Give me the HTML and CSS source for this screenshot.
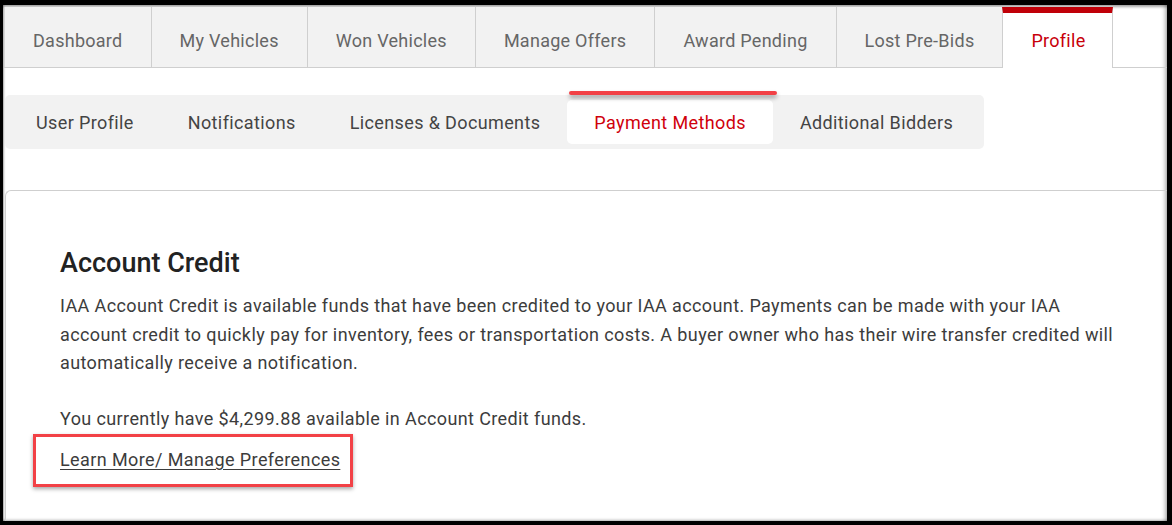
FILE: index.html
```html
<!DOCTYPE html>
<html>
<head>
<meta charset="utf-8">
<link rel="stylesheet" href="styles.css">
</head>
<body>
<div class="frame">
  <nav class="tabs">
    <a class="tab">Dashboard</a>
    <a class="tab">My Vehicles</a>
    <a class="tab">Won Vehicles</a>
    <a class="tab">Manage Offers</a>
    <a class="tab">Award Pending</a>
    <a class="tab">Lost Pre-Bids</a>
    <a class="tab tab-active">Profile</a>
  </nav>
  <div class="subnav-wrap">
    <nav class="subnav">
      <a class="sub">User Profile</a>
      <a class="sub">Notifications</a>
      <a class="sub">Licenses &amp; Documents</a>
      <a class="sub sub-active">Payment Methods<span class="mark-line"></span></a>
      <a class="sub">Additional Bidders</a>
    </nav>
  </div>
  <section class="card">
    <h2 class="title">Account Credit</h2>
    <p class="text">IAA Account Credit is available funds that have been credited to your IAA account. Payments can be made with your IAA account credit to quickly pay for inventory, fees or transportation costs. A buyer owner who has their wire transfer credited will automatically receive a notification.</p>
    <p class="text funds">You currently have $4,299.88 available in Account Credit funds.</p>
    <div class="link-row">
      <a class="link">Learn More/ Manage Preferences</a>
      <span class="mark-box"></span>
    </div>
  </section>
</div>
</body>
</html>
```

FILE: styles.css
```css
html, body {
  margin: 0;
  padding: 0;
  background: #000;
}
body {
  padding: 5px 5px 4px 3px;
  font-family: Roboto, "Liberation Sans", sans-serif;
}
.frame {
  position: relative;
  height: 516px;
  background: #fff;
  overflow: hidden;
  padding: 2px 0 0 1px;
  box-sizing: border-box;
  box-shadow: inset 0 3px 3px -1px rgba(0,0,0,0.35), inset 2px 0 2px -1px rgba(0,0,0,0.3), inset -4px 0 4px -2px rgba(0,0,0,0.3), inset 0 -3px 3px -2px rgba(0,0,0,0.25);
}
.tabs {
  display: flex;
  border-bottom: 1px solid #cfcfcf;
  height: 61px;
  box-sizing: border-box;
}
.tab {
  display: flex;
  align-items: center;
  justify-content: center;
  padding: 6px 28px 0;
  background: #f2f2f2;
  border-right: 1px solid #cfcfcf;
  color: #666;
  font-size: 18px;
  letter-spacing: 0.27px;
  height: 60px;
  box-sizing: border-box;
}
.tab:first-child {
  border-left: 1px solid #d6d6d6;
}
.tab-active {
  background: #fff;
  color: #c8000a;
  border-top: 6px solid #c00008;
  border-left: 1px solid #cfcfcf;
  margin-left: -1px;
  height: 61px;
  padding: 0 28px 0 29px;
  width: 111px;
}
.subnav-wrap {
  padding: 27px 0 0 1px;
}
.subnav {
  display: inline-flex;
  align-items: center;
  height: 54px;
  padding: 0 4px;
  background: #f2f2f2;
  border-radius: 5px;
  box-sizing: border-box;
}
.sub {
  position: relative;
  display: flex;
  align-items: center;
  height: 44px;
  padding: 1px 27px 0;
  box-sizing: border-box;
  font-size: 18px;
  letter-spacing: 0.38px;
  color: #444;
  border-radius: 5px;
}
.sub-active {
  background: #fff;
  color: #d0000b;
}
.mark-line {
  position: absolute;
  left: 2px;
  right: -4px;
  top: -9px;
  height: 4px;
  background: #f24146;
  border-radius: 3px;
  box-shadow: 0 3px 4px rgba(0,0,0,0.35);
}
.card {
  margin: 41px 0 0 1px;
  border: 1px solid #cfcfcf;
  border-right: none;
  border-radius: 6px 0 0 0;
  padding: 55px 0 0 54px;
  height: 400px;
}
.title {
  margin: 0 0 12px;
  font-size: 27px;
  font-weight: 500;
  color: #222;
  line-height: 34px;
}
.text {
  max-width: 1065px;
  margin: 0 0 27px;
  font-size: 18px;
  letter-spacing: 0.39px;
  line-height: 28.5px;
  color: #3c3c3c;
}
.funds {
  margin-bottom: 13px;
}
.link-row {
  position: relative;
  display: inline-block;
}
.link {
  font-size: 18px;
  letter-spacing: 0.4px;
  line-height: 28px;
  color: #3c3c3c;
  text-decoration: underline;
  text-underline-offset: 3px;
}
.mark-box {
  position: absolute;
  left: -27px;
  right: -13px;
  top: -12px;
  height: 53px;
  box-sizing: border-box;
  border: 3px solid #f24146;
  box-shadow: 0 2px 4px rgba(0,0,0,0.35);
}
```
